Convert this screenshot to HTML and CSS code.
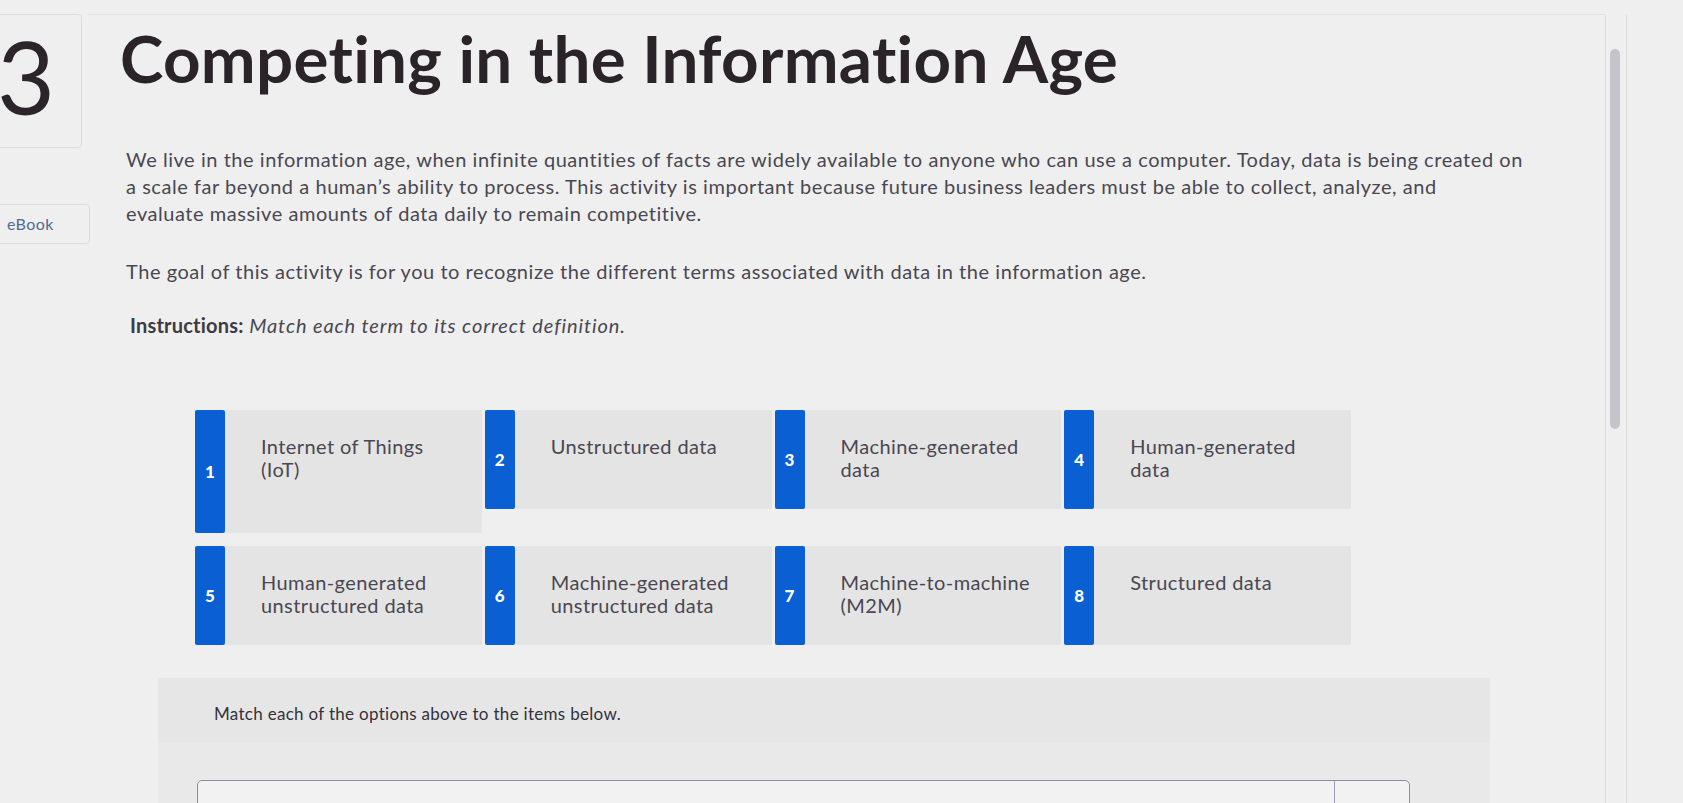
FILE: index.html
```html
<!DOCTYPE html>
<html lang="en">
<head>
<meta charset="utf-8">
<title>Competing in the Information Age</title>
<link rel="stylesheet" href="styles.css">
</head>
<body>
<div class="app">
  <aside class="side">
    <div class="qnum">3</div>
    <div class="ebook">eBook</div>
  </aside>
  <main class="content">
    <h1 class="title">Competing in the Information Age</h1>
    <p class="para para-intro">We live in the information age, when infinite quantities of facts are widely available to anyone who can use a computer. Today, data is being created on<br>a scale far beyond a human’s ability to process. This activity is important because future business leaders must be able to collect, analyze, and<br>evaluate massive amounts of data daily to remain competitive.</p>
    <p class="para para-goal">The goal of this activity is for you to recognize the different terms associated with data in the information age.</p>
    <p class="para para-instr"><span class="instr-label">Instructions:</span> <em>Match each term to its correct definition.</em></p>

    <div class="cards">
      <div class="card card-tall"><div class="tab">1</div><div class="term">Internet of Things<br>(IoT)</div></div>
      <div class="card"><div class="tab">2</div><div class="term">Unstructured data</div></div>
      <div class="card"><div class="tab">3</div><div class="term">Machine-generated<br>data</div></div>
      <div class="card"><div class="tab">4</div><div class="term">Human-generated<br>data</div></div>
      <div class="card"><div class="tab">5</div><div class="term">Human-generated<br>unstructured data</div></div>
      <div class="card"><div class="tab">6</div><div class="term">Machine-generated<br>unstructured data</div></div>
      <div class="card"><div class="tab">7</div><div class="term">Machine-to-machine<br>(M2M)</div></div>
      <div class="card"><div class="tab">8</div><div class="term">Structured data</div></div>
    </div>

    <section class="match">
      <div class="match-head">Match each of the options above to the items below.</div>
      <div class="match-body">
        <div class="answer"><div class="answer-field"></div><div class="answer-drop"></div></div>
      </div>
    </section>
  </main>
  <div class="scroll"><div class="thumb"></div></div>
</div>
</body>
</html>
```
FILE: styles.css
```css
html, body {
  margin: 0;
  padding: 0;
  height: 100%;
  overflow: hidden;
}
body {
  background: #efefef;
  font-family: Lato, "Open Sans", Arial, sans-serif;
  color: #45434b;
}
.app {
  display: flex;
  height: 803px;
  padding-top: 14px;
  box-sizing: border-box;
}
.side {
  width: 100px;
  flex: none;
  display: flex;
  flex-direction: column;
  gap: 56px;
  margin-left: -12px;
}
.qnum {
  width: 94px;
  height: 134px;
  box-sizing: border-box;
  border: 1px solid #dcdcdc;
  border-radius: 4px;
  font-size: 100px;
  font-weight: 400;
  line-height: 122px;
  color: #2b2529;
  padding-left: 8px;
}
.ebook {
  width: 102px;
  height: 40px;
  box-sizing: border-box;
  border: 1px solid #dcdcdc;
  border-radius: 4px;
  font-size: 16px;
  letter-spacing: 0.4px;
  line-height: 38px;
  padding-left: 18px;
  color: #4f6a95;
}
.content {
  flex: none;
  width: 1517px;
  border-top: 1px solid #e2e2e2;
  padding-left: 38px;
  box-sizing: border-box;
}
.title {
  margin: 0 0 0 -6px;
  padding-top: 2px;
  font-size: 65.5px;
  font-weight: 700;
  line-height: 82px;
  color: #2a2428;
  letter-spacing: 0.3px;
}
.para {
  margin: 0;
  font-size: 20px;
  letter-spacing: 0.55px;
  line-height: 27px;
  color: #4a4752;
}
.para-intro { margin-top: 47px; }
.para-goal { margin-top: 31px; }
.para-instr { margin-top: 27px; padding-left: 4px; }
.instr-label { font-weight: 700; color: #3d3a42; letter-spacing: 0.2px; }
.para-instr em { font-style: italic; letter-spacing: 0.9px; }

.cards {
  margin: 71px 0 0 69px;
  width: 1156px;
  display: grid;
  grid-template-columns: repeat(4, 1fr);
  column-gap: 3px;
  row-gap: 13px;
  align-items: start;
}
.card {
  display: flex;
  height: 99px;
  background: #e4e4e4;
}
.card-tall { height: 123px; }
.tab {
  width: 30px;
  flex: none;
  background: #0a5fd2;
  color: #ffffff;
  font-weight: 900;
  font-size: 17px;
  display: flex;
  align-items: center;
  justify-content: center;
  border-radius: 2px;
}
.term {
  padding: 25px 0 0 36px;
  font-size: 20px;
  letter-spacing: 0.4px;
  line-height: 23px;
  color: #4a4752;
}

.match {
  margin: 33px 0 0 32px;
  width: 1332px;
  background: #e6e6e6;
}
.match-head {
  height: 64px;
  padding-left: 56px;
  font-size: 17px;
  letter-spacing: 0.3px;
  line-height: 72px;
  color: #34313a;
}
.match-body {
  background: #e9e9e9;
  padding: 38px 80px 0 39px;
  height: 60px;
}
.answer {
  display: flex;
  height: 60px;
  border: 1px solid #8c8ca3;
  border-radius: 5px;
  background: #f2f2f2;
}
.answer-field { flex: 1; }
.answer-drop { width: 74px; border-left: 1px solid #9a9ab0; }

.scroll {
  flex: none;
  width: 20px;
  height: 900px;
  margin-top: 1px;
  border-left: 1px solid #dcdcdc;
  border-right: 1px solid #dcdcdc;
  position: relative;
}
.thumb {
  position: absolute;
  left: 4px;
  top: 34px;
  width: 10px;
  height: 380px;
  border-radius: 6px;
  background: #c4c4ca;
}
```
